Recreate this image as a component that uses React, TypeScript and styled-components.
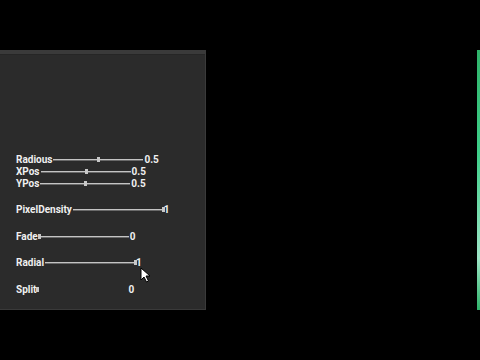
import React from "react";
import styled, { createGlobalStyle } from "styled-components";

const sliders = [
  { label: "Radious", value: 0.5, text: "0.5" },
  { label: "XPos", value: 0.5, text: "0.5" },
  { label: "YPos", value: 0.5, text: "0.5" },
  { label: "PixelDensity", value: 1, text: "1", gap: true },
  { label: "Fade", value: 0, text: "0", gap: true },
  { label: "Radial", value: 1, text: "1", gap: true },
  { label: "Split", value: 0, text: "0", gap: true, hidden: true },
];

const App = () => {
  return (
    <Screen>
      <GlobalStyle />
      <Panel>
        <TopBar />
        <Rows>
          {sliders.map((s) => (
            <Row key={s.label} $gap={s.gap}>
              <Label>{s.label}</Label>
              <Track $hidden={s.hidden}>
                <Thumb style={{ left: `${s.value * 100}%` }} />
              </Track>
              <Value>{s.text}</Value>
            </Row>
          ))}
        </Rows>
        <Cursor width="11" height="16" viewBox="0 0 11 16">
          <path
            d="M1 1 L1 13 L4 10 L6.5 15 L8.5 14 L6 9 L10 9 Z"
            fill="#fff"
            stroke="#000"
            strokeWidth="1"
          />
        </Cursor>
      </Panel>
      <GreenStrip />
    </Screen>
  );
};

const GlobalStyle = createGlobalStyle`
  html, body {
    margin: 0;
    padding: 0;
    background: #000;
  }
`;

const Screen = styled.div`
  width: 480px;
  height: 360px;
  display: flex;
  justify-content: space-between;
  align-items: flex-start;
  padding-top: 50px;
  box-sizing: border-box;
  overflow: hidden;
`;

const Panel = styled.div`
  position: relative;
  width: 206px;
  height: 260px;
  background: #2b2b2b;
  border-right: 1px solid #3a3a3a;
  border-bottom: 1px solid #3a3a3a;
  box-sizing: border-box;
  display: flex;
  flex-direction: column;
`;

const TopBar = styled.div`
  height: 4px;
  background: #3a3a3a;
  border-bottom: 1px solid #262626;
`;

const Rows = styled.div`
  display: flex;
  flex-direction: column;
  padding: 98px 0 0 16px;
`;

const Row = styled.div<{ $gap?: boolean }>`
  display: flex;
  align-items: center;
  height: 12px;
  margin-top: ${(p) => (p.$gap ? "14.5px" : "0")};
`;

const Label = styled.span`
  font-family: Roboto, "Liberation Sans", sans-serif;
  font-weight: 700;
  font-size: 10px;
  color: #f0f0f0;
  white-space: nowrap;
`;

const Track = styled.div<{ $hidden?: boolean }>`
  position: relative;
  width: 90px;
  height: 1px;
  margin-left: 1px;
  background: ${(p) => (p.$hidden ? "transparent" : "#c4c4c4")};
  box-shadow: ${(p) => (p.$hidden ? "none" : "0 1px 0 #6a6a6a")};
`;

const Thumb = styled.div`
  position: absolute;
  top: -2px;
  width: 3px;
  height: 5px;
  margin-left: -1px;
  background: #c8c8c8;
`;

const Value = styled.span`
  font-family: Roboto, "Liberation Sans", sans-serif;
  font-weight: 700;
  font-size: 10px;
  color: #f0f0f0;
  margin-left: 1px;
`;

const Cursor = styled.svg`
  position: absolute;
  left: 140px;
  top: 217px;
`;

const GreenStrip = styled.div`
  width: 3px;
  height: 260px;
  background: linear-gradient(180deg, #2fb36a, #3fcf8a 40%, #9fe6c8 80%, #2fb36a);
`;

export default App;
